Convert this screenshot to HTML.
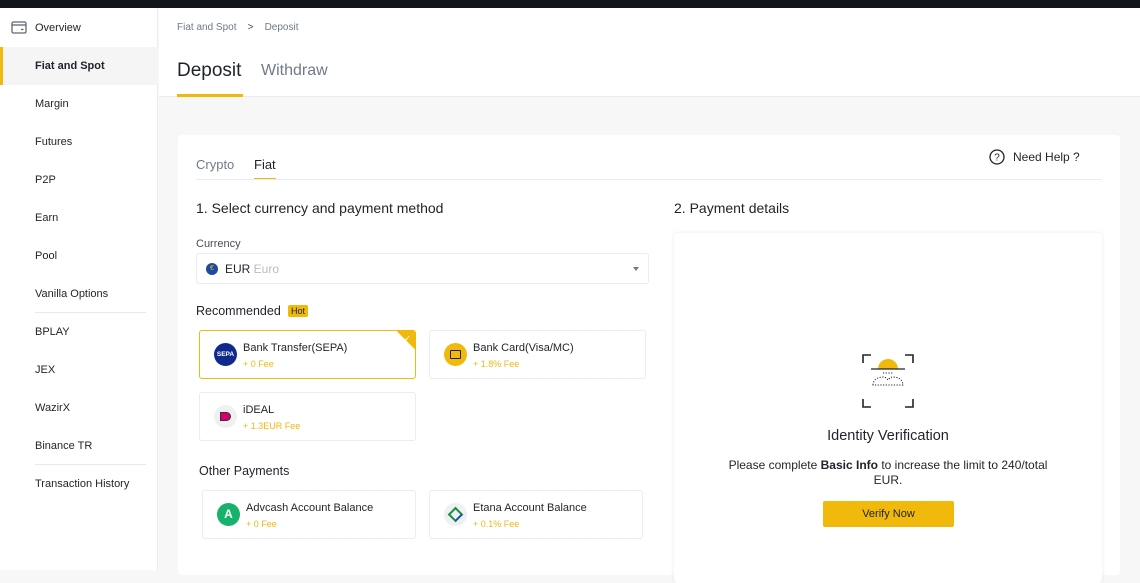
<!DOCTYPE html>
<html><head><style>
*{margin:0;padding:0;box-sizing:border-box}
body{width:1140px;height:570px;overflow:hidden;background:#f7f7f7;font-family:"Liberation Sans",sans-serif;color:#1e2329;position:relative}
.a{position:absolute}
.top{left:0;top:0;width:1140px;height:8px;background:#12161c}
.side{left:0;top:8px;width:158px;height:562px;background:#fff;border-right:1px solid #eaecef}
.si{position:absolute;left:35px;font-size:11px;color:#1e2329}
.sep{position:absolute;left:35px;width:111px;height:1px;background:#e6e8ea}
.hdr{left:159px;top:8px;width:981px;height:89px;background:#fff;border-bottom:1px solid #eaecef}
.card{left:178px;top:135px;width:942px;height:440px;background:#fff;border-radius:4px}
.pm{position:absolute;background:#fff;border:1px solid #eaecef;border-radius:3px;height:49px}
.pm .t{position:absolute;left:43px;top:11px;font-size:11px;color:#1e2329}
.pm .f{position:absolute;left:43px;top:28px;font-size:9px;color:#f0b90b}
.pm .ic{position:absolute;left:14px;top:12px;width:23px;height:23px;border-radius:50%}
</style></head><body>
<div class="a top"></div>
<div class="a side">
<svg class="a" style="left:11px;top:13px" width="16" height="13" viewBox="0 0 16 13"><rect x="1" y="1" width="14" height="11" rx="1.5" fill="none" stroke="#5e6673" stroke-width="1.3"/><line x1="1" y1="4" x2="15" y2="4" stroke="#5e6673" stroke-width="1.3"/><line x1="10" y1="8.5" x2="12.5" y2="8.5" stroke="#5e6673" stroke-width="1.3"/></svg>
<div class="si" style="top:14px">Overview</div>
<div class="a" style="left:0;top:39px;width:158px;height:38px;background:#f5f5f5;border-left:3px solid #f0b90b"></div>
<div class="si" style="top:52px;font-weight:bold">Fiat and Spot</div>
<div class="si" style="top:90px">Margin</div>
<div class="si" style="top:128px">Futures</div>
<div class="si" style="top:166px">P2P</div>
<div class="si" style="top:204px">Earn</div>
<div class="si" style="top:242px">Pool</div>
<div class="si" style="top:280px">Vanilla Options</div>
<div class="sep" style="top:304px"></div>
<div class="si" style="top:318px">BPLAY</div>
<div class="si" style="top:356px">JEX</div>
<div class="si" style="top:394px">WazirX</div>
<div class="si" style="top:432px">Binance TR</div>
<div class="sep" style="top:456px"></div>
<div class="si" style="top:470px">Transaction History</div>
</div>
<div class="a hdr">
<div class="a" style="left:18px;top:14px;font-size:10px;color:#707a8a">Fiat and Spot&nbsp;&nbsp;&nbsp;&nbsp;<span style="color:#474d57">&gt;</span>&nbsp;&nbsp;&nbsp;&nbsp;Deposit</div>
<div class="a" style="left:18px;top:52px;font-size:19px;color:#1e2329">Deposit</div>
<div class="a" style="left:18px;top:86px;width:66px;height:3px;background:#f0b90b"></div>
<div class="a" style="left:102px;top:54px;font-size:16px;color:#707a8a">Withdraw</div>
</div>
<div class="a card">
<div class="a" style="left:18px;top:22px;font-size:13px;color:#707a8a">Crypto</div>
<div class="a" style="left:76px;top:22px;font-size:13px;color:#1e2329">Fiat</div>
<div class="a" style="left:76px;top:43px;width:22px;height:2px;background:#f0b90b"></div>
<div class="a" style="left:18px;top:44px;width:906px;height:1px;background:#eaecef"></div>
<svg class="a" style="left:811px;top:14px" width="16" height="16" viewBox="0 0 16 16"><circle cx="8" cy="8" r="7" fill="none" stroke="#1e2329" stroke-width="1.3"/><text x="8" y="11.5" font-size="10" text-anchor="middle" font-family="Liberation Sans" fill="#1e2329">?</text></svg>
<div class="a" style="left:835px;top:15px;font-size:12px">Need Help ?</div>
<div class="a" style="left:18px;top:65px;font-size:14px">1. Select currency and payment method</div>
<div class="a" style="left:496px;top:65px;font-size:14px">2. Payment details</div>
<div class="a" style="left:18px;top:103px;font-size:11px;color:#474d57">Currency</div>
<div class="a" style="left:18px;top:118px;width:453px;height:31px;border:1px solid #eaecef;border-radius:3px">
<div class="a" style="left:9px;top:9px;width:12px;height:12px;border-radius:50%;background:#1d4aa4;color:#f0b90b;font-size:7px;text-align:center;line-height:12px">€</div>
<div class="a" style="left:28px;top:8px;font-size:12px">EUR <span style="color:#b7bdc6">Euro</span></div>
<div class="a" style="left:436px;top:13px;width:0;height:0;border-left:3px solid transparent;border-right:3px solid transparent;border-top:4px solid #707a8a"></div>
</div>
<div class="a" style="left:18px;top:169px;font-size:12.5px;color:#1e2329">Recommended</div>
<div class="a" style="left:110px;top:170px;background:#f0b90b;font-size:9px;padding:1px 3px;border-radius:2px">Hot</div>
<div class="pm" style="left:21px;top:195px;width:217px;border-color:#f0b90b;overflow:hidden">
<div class="ic" style="background:#10298e;color:#fff;font-size:6.5px;font-weight:bold;line-height:23px;text-align:center">SEPA</div>
<div class="t">Bank Transfer(SEPA)</div><div class="f">+ 0 Fee</div>
<div class="a" style="right:-13px;top:-13px;width:26px;height:26px;background:#f0b90b;transform:rotate(45deg)"></div>
<div class="a" style="right:4px;top:3px;font-size:8px;color:#fff">✓</div>
</div>
<div class="pm" style="left:251px;top:195px;width:217px">
<div class="ic" style="background:#f0b90b"><div class="a" style="left:6px;top:7px;width:11px;height:9px;border:1.3px solid #1e2329;border-radius:1px"></div></div>
<div class="t">Bank Card(Visa/MC)</div><div class="f">+ 1.8% Fee</div>
</div>
<div class="pm" style="left:21px;top:257px;width:217px">
<div class="ic" style="background:#f0f0f0"><div class="a" style="left:6px;top:7px;width:11px;height:9px;background:#d50072;border-radius:0 5px 5px 0;border:1px solid #333"></div></div>
<div class="t">iDEAL</div><div class="f">+ 1.3EUR Fee</div>
</div>
<div class="a" style="left:21px;top:329px;font-size:12.5px">Other Payments</div>
<div class="pm" style="left:24px;top:355px;width:214px">
<div class="ic" style="background:#16b16a;color:#fff;font-weight:bold;font-size:12px;text-align:center;line-height:23px">A</div>
<div class="t">Advcash Account Balance</div><div class="f">+ 0 Fee</div>
</div>
<div class="pm" style="left:251px;top:355px;width:214px">
<div class="ic" style="background:#eef0f3"><div class="a" style="left:6px;top:6px;width:11px;height:11px;border:2px solid #1a8e3c;transform:rotate(45deg);border-right-color:#1d4aa4"></div></div>
<div class="t">Etana Account Balance</div><div class="f">+ 0.1% Fee</div>
</div>
<div class="a" style="left:496px;top:98px;width:428px;height:350px;background:#fff;box-shadow:0 0 4px rgba(0,0,0,0.08);border-radius:3px">
<svg class="a" style="left:187px;top:120px" width="54" height="56" viewBox="0 0 54 56"><path d="M2 10V2h8M44 2h8v8M2 46v8h8M44 54h8v-8" fill="none" stroke="#1e2329" stroke-width="1.6"/><path d="M17 16a10 10 0 0 1 20 0z" fill="#f0b90b"/><line x1="10" y1="16" x2="44" y2="16" stroke="#1e2329" stroke-width="1.2"/><path d="M12 32c0-6 6-8 10-8 3 0 4 2 5 3 1-1 2-3 5-3 4 0 10 2 10 8zM22 20h10" fill="none" stroke="#1e2329" stroke-width="1" stroke-dasharray="1.2 1.5"/></svg>
<div class="a" style="left:0;width:428px;top:195px;text-align:center;font-size:14.5px">Identity Verification</div>
<div class="a" style="left:39px;width:350px;top:225px;text-align:center;font-size:12px;line-height:15px">Please complete <b>Basic Info</b> to increase the limit to 240/total EUR.</div>
<div class="a" style="left:149px;top:268px;width:131px;height:26px;background:#f0b90b;border-radius:2px;text-align:center;line-height:26px;font-size:11px">Verify Now</div>
</div>
</div>
</body></html>
